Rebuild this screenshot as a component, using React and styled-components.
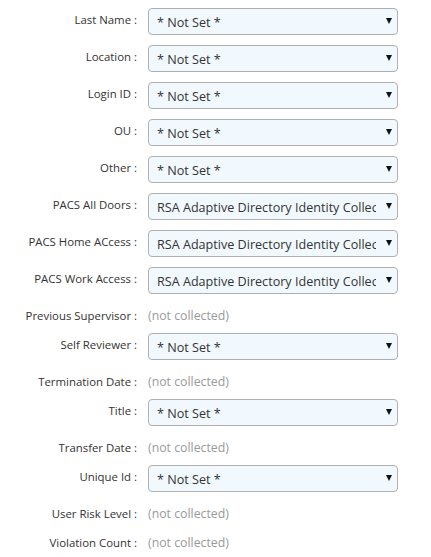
import React from "react";
import styled, { createGlobalStyle } from "styled-components";

const GlobalStyle = createGlobalStyle`
  html, body { margin: 0; padding: 0; background: #ffffff; }
  body { font-family: "Open Sans", "Noto Sans", sans-serif; }
`;

const Form = styled.div`
  display: flex;
  flex-direction: column;
  gap: 10px;
  padding-top: 8px;
  width: 431px;
`;

const Row = styled.div`
  display: grid;
  grid-template-columns: 137px 250px;
  column-gap: 11px;
  align-items: start;
  height: ${(p) => (p.$kind === "select" ? "27px" : "19px")};
`;

const Label = styled.div`
  font-size: 11.4px;
  line-height: 16px;
  color: #333333;
  text-align: right;
  white-space: nowrap;
  padding-top: 4px;
`;

const Empty = styled.div`
  font-size: 12.3px;
  line-height: 17px;
  padding-top: 3px;
  color: #9a9a9a;
  white-space: nowrap;
`;

const SelectBox = styled.div`
  box-sizing: border-box;
  height: 27px;
  display: flex;
  align-items: center;
  border: 1px solid #b0b0b0;
  border-radius: 4px;
  background: #f1f9fe;
  padding: 0 5px 0 8px;
  gap: 10px;
`;

const Value = styled.span`
  flex: 1;
  overflow: hidden;
  white-space: nowrap;
  font-size: 12.6px;
  line-height: 18px;
  padding-top: 2px;
  color: #333333;
`;

const Arrow = styled.svg`
  flex: none;
  width: 6px;
  height: 6px;
  margin-top: -1px;
`;

const rows = [
  ["Last Name", "select", "* Not Set *"],
  ["Location", "select", "* Not Set *"],
  ["Login ID", "select", "* Not Set *"],
  ["OU", "select", "* Not Set *"],
  ["Other", "select", "* Not Set *"],
  ["PACS All Doors", "select", "RSA Adaptive Directory Identity Collector"],
  ["PACS Home ACcess", "select", "RSA Adaptive Directory Identity Collector"],
  ["PACS Work Access", "select", "RSA Adaptive Directory Identity Collector"],
  ["Previous Supervisor", "text"],
  ["Self Reviewer", "select", "* Not Set *"],
  ["Termination Date", "text"],
  ["Title", "select", "* Not Set *"],
  ["Transfer Date", "text"],
  ["Unique Id", "select", "* Not Set *"],
  ["User Risk Level", "text"],
  ["Violation Count", "text"],
];

export default function App() {
  return (
    <>
      <GlobalStyle />
      <Form>
        {rows.map(([label, kind, value]) => (
          <Row key={label} $kind={kind}>
            <Label>{label} :</Label>
            {kind === "select" ? (
              <SelectBox>
                <Value>{value}</Value>
                <Arrow viewBox="0 0 6 6">
                  <path d="M0 0 H6 L3 6 Z" fill="#111" />
                </Arrow>
              </SelectBox>
            ) : (
              <Empty>(not collected)</Empty>
            )}
          </Row>
        ))}
      </Form>
    </>
  );
}
